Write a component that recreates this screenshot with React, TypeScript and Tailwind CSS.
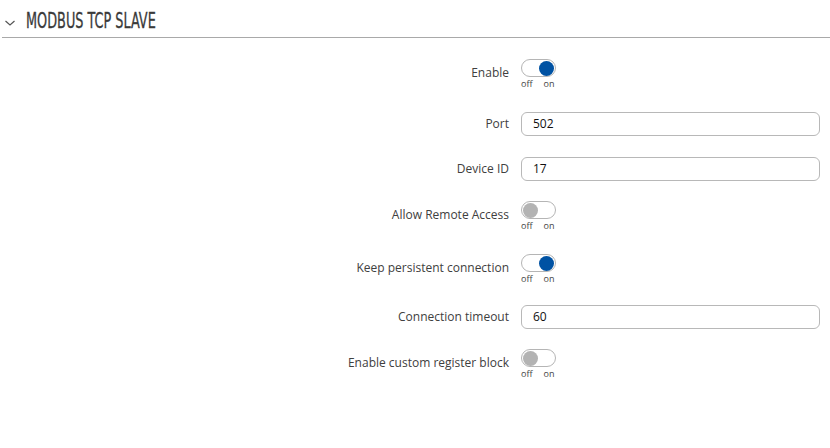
import React from "react";

type Row =
  | { kind: "toggle"; label: string; on: boolean; mt: string }
  | { kind: "input"; label: string; value: string; mt: string };

const rows: Row[] = [
  { kind: "toggle", label: "Enable", on: true, mt: "mt-[21px]" },
  { kind: "input", label: "Port", value: "502", mt: "mt-[22px]" },
  { kind: "input", label: "Device ID", value: "17", mt: "mt-[21px]" },
  { kind: "toggle", label: "Allow Remote Access", on: false, mt: "mt-[20px]" },
  { kind: "toggle", label: "Keep persistent connection", on: true, mt: "mt-[22px]" },
  { kind: "input", label: "Connection timeout", value: "60", mt: "mt-[20px]" },
  { kind: "toggle", label: "Enable custom register block", on: false, mt: "mt-[20px]" },
];

function Toggle({ on }: { on: boolean }) {
  return (
    <div className="flex flex-col">
      <div className="w-[35px] h-[18px] rounded-full border border-[#b5b5b5] bg-white flex items-center px-[1px]">
        {on ? (
          <div className="ml-auto w-[15px] h-[15px] rounded-full bg-[#0052a3]" />
        ) : (
          <div className="w-[15px] h-[15px] rounded-full bg-[#b3b3b3]" />
        )}
      </div>
      <div className="flex gap-[11px] text-[9px] leading-[12px] text-[#444] mt-[1px]">
        <span>off</span>
        <span>on</span>
      </div>
    </div>
  );
}

export default function App() {
  return (
    <div className="w-[830px] h-[448px] bg-white font-['Open_Sans',sans-serif]">
      <div className="flex items-center h-[38px] pt-[6px] ml-[2px] border-b border-[#a9a9a9]">
        <svg width="12" height="8" viewBox="0 0 12 8" className="ml-[2px] mt-[3px]">
          <path d="M1.5 2 L6 6 L10.5 2" fill="none" stroke="#555" strokeWidth="1.2" />
        </svg>
        <span className="ml-[10px] text-[21px] text-[#3a3a3a] font-['DejaVu_Sans_Condensed','Liberation_Sans_Narrow',sans-serif] [-webkit-text-stroke:0.3px_#3a3a3a] scale-x-[0.68] origin-left inline-block whitespace-nowrap">
          MODBUS TCP SLAVE
        </span>
      </div>

      <div className="flex flex-col">
        {rows.map((r) => (
          <div key={r.label} className={`flex ${r.mt}`}>
            <div
              className={`w-[509px] text-right text-[12px] text-[#404040] h-[24px] leading-[24px] ${
                r.kind === "toggle" ? "pt-[2px] -mb-[6px]" : ""
              }`}
            >
              {r.label}
            </div>
            <div className="ml-[12px]">
              {r.kind === "toggle" ? (
                <Toggle on={r.on} />
              ) : (
                <div className="w-[299px] h-[24px] rounded-[6px] border border-[#b8b8b8] pl-[11px] text-[12px] leading-[22px] font-medium text-[#111]">
                  {r.value}
                </div>
              )}
            </div>
          </div>
        ))}
      </div>
    </div>
  );
}
